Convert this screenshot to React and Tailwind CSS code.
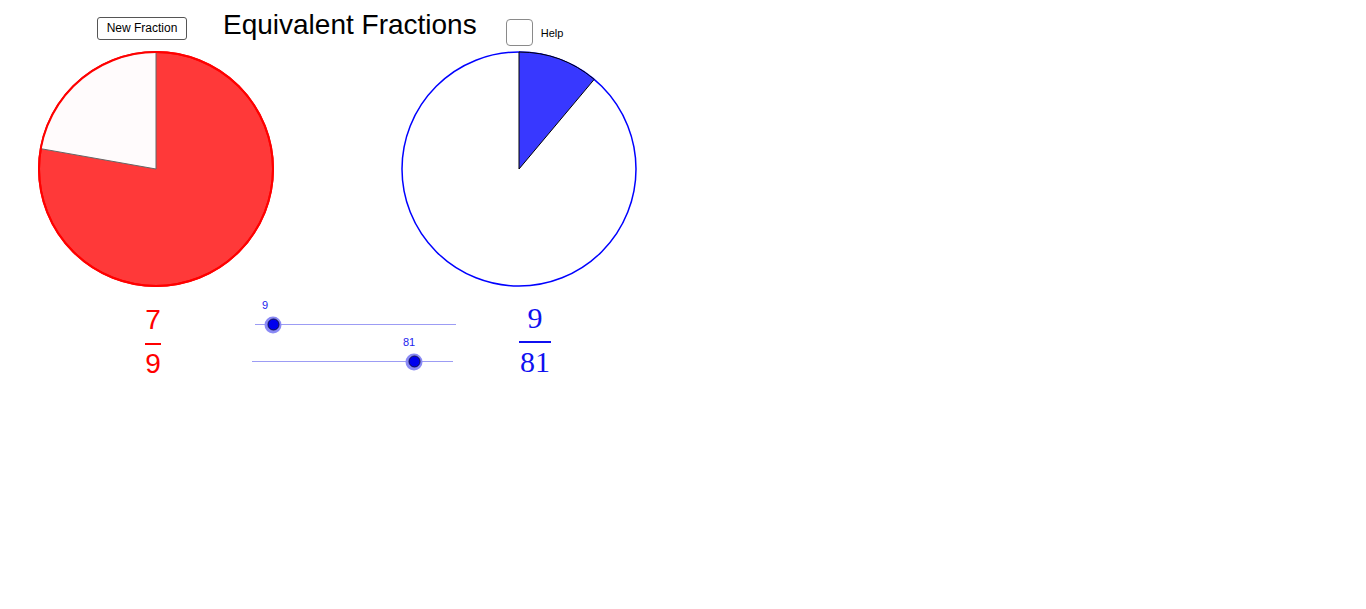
import React from "react";

const R = 117;

function polar(deg) {
  // degrees measured clockwise from 12 o'clock, svg centre at 120,120
  const a = (deg * Math.PI) / 180;
  return [120 + R * Math.sin(a), 120 - R * Math.cos(a)];
}

function RedPie() {
  const [x, y] = polar(-80);
  return (
    <svg width="240" height="240" viewBox="0 0 240 240" className="block">
      <circle cx="120" cy="120" r={R} fill="#ff3939" stroke="#ff0000" strokeWidth="2" />
      <path
        d={`M120 120 L120 ${120 - R} A${R} ${R} 0 0 0 ${x} ${y} Z`}
        fill="#fffbfc"
        stroke="#666"
        strokeWidth="1"
      />
      <circle cx="120" cy="120" r={R} fill="none" stroke="#ff0000" strokeWidth="2" />
    </svg>
  );
}

function BluePie() {
  const [x, y] = polar(40);
  return (
    <svg width="240" height="240" viewBox="0 0 240 240" className="block">
      <circle cx="120" cy="120" r={R} fill="#ffffff" stroke="#0000ff" strokeWidth="1.5" />
      <path
        d={`M120 120 L120 ${120 - R} A${R} ${R} 0 0 1 ${x} ${y} Z`}
        fill="#3838ff"
        stroke="#000"
        strokeWidth="1"
      />
    </svg>
  );
}

function Slider({ lineLeft, thumbX, labelX, labelTop, label }) {
  return (
    <div className="relative h-[37px] w-[204px]">
      <span
        className="absolute text-[11px] leading-none text-[#2222ee] -translate-x-1/2"
        style={{ left: labelX, top: labelTop }}
      >
        {label}
      </span>
      <div className="h-[35px]" />
      <div className="h-px w-[201px] bg-[#9c9cf4]" style={{ marginLeft: lineLeft }} />
      <div
        className="absolute w-[17px] h-[17px] rounded-full bg-[#8a8af5] flex items-center justify-center -translate-x-1/2 -translate-y-1/2"
        style={{ left: thumbX, top: 35.5 }}
      >
        <div className="w-[12px] h-[12px] rounded-full bg-[#0000ee] border border-[#10104a]" />
      </div>
    </div>
  );
}

export default function App() {
  return (
    <div className="w-[1366px] h-[609px] bg-white overflow-hidden font-['Liberation_Sans',Arial,sans-serif] text-black">
      {/* top bar */}
      <div className="flex items-start h-[49px]">
        <button className="ml-[97px] mt-[17px] w-[90px] h-[23px] border border-[#555] rounded-[3px] bg-white text-[12px] leading-none pb-[1px]">
          New Fraction
        </button>
        <h1 className="ml-[36px] mt-[11px] text-[28px] leading-[28px] font-normal whitespace-nowrap">
          Equivalent Fractions
        </h1>
        <div className="ml-[29px] mt-[19px] w-[27px] h-[27px] border-[1.5px] border-[#8a8a8a] rounded-[4px] bg-white" />
        <span className="ml-[8px] mt-[28px] text-[11px] leading-[11px]">Help</span>
      </div>

      {/* pies */}
      <div className="flex">
        <div className="ml-[36px]">
          <RedPie />
        </div>
        <div className="ml-[123px]">
          <BluePie />
        </div>
      </div>

      {/* fractions and sliders */}
      <div className="flex items-start">
        <div className="ml-[133px] mt-[17px] w-[40px] flex flex-col items-center text-[#ff0000]">
          <span className="text-[28px] leading-[28px]">7</span>
          <div className="mt-[9px] w-[16px] h-[1.5px] bg-[#ff0000]" />
          <span className="mt-[5px] text-[28px] leading-[28px]">9</span>
        </div>

        <div className="ml-[79px] flex flex-col">
          <Slider lineLeft={3} thumbX={21} labelX={13} labelTop={11} label="9" />
          <Slider lineLeft={0} thumbX={162} labelX={157} labelTop={11} label="81" />
        </div>

        <div className="ml-[59px] mt-[14px] w-[40px] flex flex-col items-center text-[#1010f0] font-['Liberation_Serif','Times_New_Roman',serif]">
          <span className="text-[30px] leading-[30px]">9</span>
          <div className="mt-[8px] w-[32px] h-[1.5px] bg-[#1010f0]" />
          <span className="mt-[4px] text-[30px] leading-[30px]">81</span>
        </div>
      </div>
    </div>
  );
}
